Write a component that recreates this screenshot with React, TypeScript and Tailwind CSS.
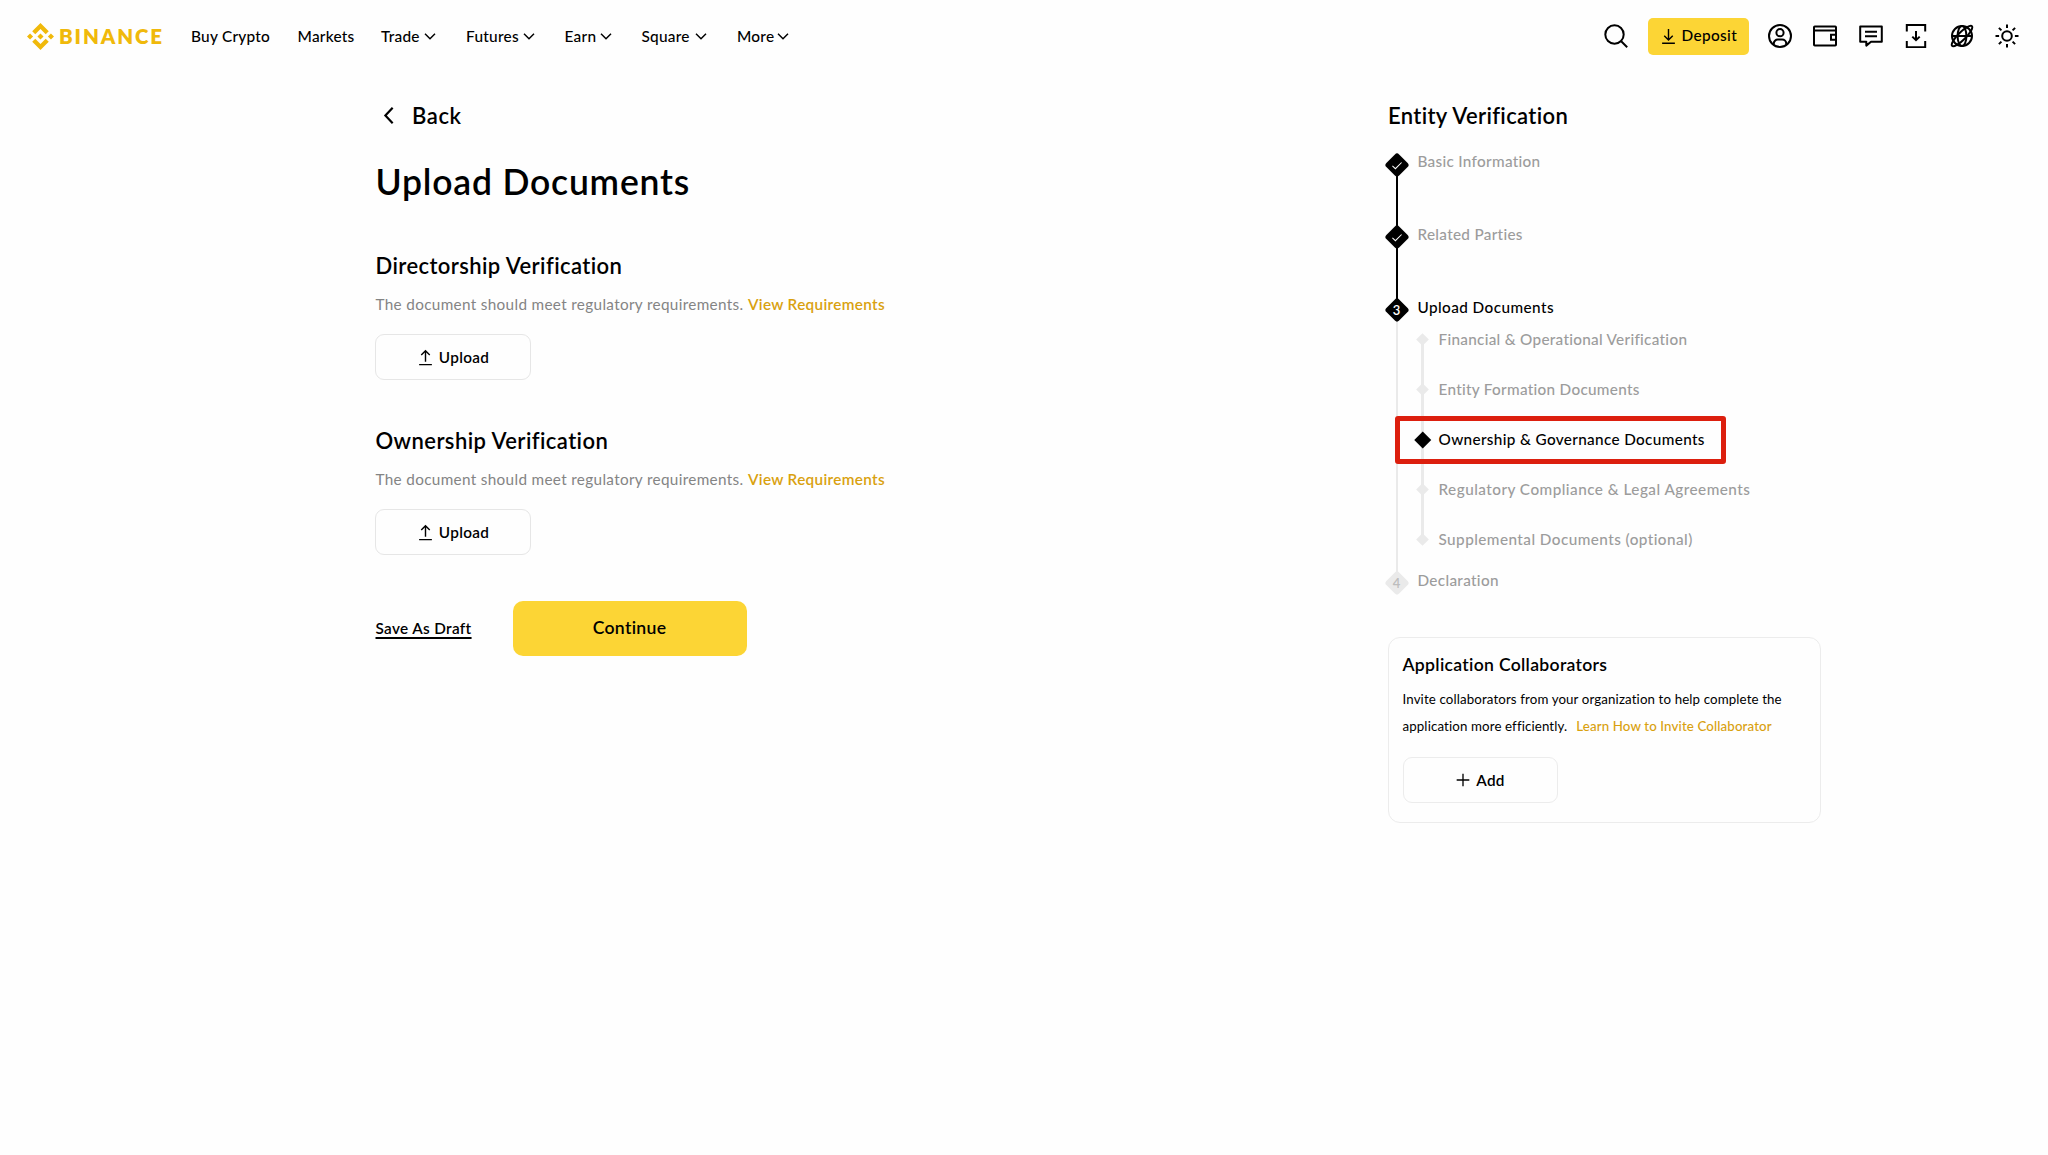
import type { ReactNode } from 'react'
import { SiBinance } from 'react-icons/si'

const NAV = [
  { label: 'Buy Crypto', menu: false, width: 'w-[78.5px]' },
  { label: 'Markets', menu: false, width: 'w-[55.5px]' },
  { label: 'Trade', menu: true, width: 'w-[39.5px]' },
  { label: 'Futures', menu: true, width: 'w-[53px]' },
  { label: 'Earn', menu: true, width: 'w-[31.5px]' },
  { label: 'Square', menu: true, width: 'w-[50px]' },
  { label: 'More', menu: true, width: 'w-[36.5px]' },
]

const SECTIONS = [
  { title: 'Directorship Verification', tracking: 'tracking-[0.4px]' },
  { title: 'Ownership Verification', tracking: 'tracking-[0.42px]' },
]

const SUB_STEPS = [
  { label: 'Financial & Operational Verification', active: false, tracking: 'tracking-[0.29px]' },
  { label: 'Entity Formation Documents', active: false, tracking: 'tracking-[0.29px]' },
  { label: 'Ownership & Governance Documents', active: true, tracking: 'tracking-[0.35px]' },
  { label: 'Regulatory Compliance & Legal Agreements', active: false, tracking: 'tracking-[0.47px]' },
  { label: 'Supplemental Documents (optional)', active: false, tracking: 'tracking-[0.44px]' },
]

function Icon({ children, className = 'size-6' }: { children: ReactNode; className?: string }) {
  return (
    <svg
      viewBox="0 0 24 24"
      fill="none"
      stroke="currentColor"
      strokeWidth="2"
      className={`shrink-0 ${className}`}
    >
      {children}
    </svg>
  )
}

function Header() {
  return (
    <header className="flex h-[73px] items-center justify-between pr-[29px] pl-[27px]">
      <div className="flex items-center">
        <div className="flex w-[164px] items-center text-[#f0b90b]">
          <SiBinance className="size-[27px] shrink-0" />
          <span className="ml-[5px] pb-px text-[20.5px] leading-6 font-extrabold tracking-[1.9px]">BINANCE</span>
        </div>
        <nav className="flex items-center gap-7 pb-[2px] text-[15.4px] leading-6 font-medium tracking-[0.25px]">
          {NAV.map((item) => (
            <div key={item.label} className="flex items-center whitespace-nowrap">
              <span className={item.width}>{item.label}</span>
              {item.menu && (
                <Icon className="ml-[1.5px] size-4">
                  <path d="M4.5 8.5l7.5 7.5 7.5-7.5" strokeWidth="2.2" />
                </Icon>
              )}
            </div>
          ))}
        </nav>
      </div>

      <div className="flex items-center pb-px">
        <Icon>
          <circle cx="10.5" cy="10.5" r="9.2" />
          <path d="M17.2 17.2l6 6" />
        </Icon>
        <button className="mr-[19px] ml-5 flex h-[37px] w-[100.5px] items-center rounded-[5px] bg-[#fcd535] pl-[12px] text-[15.4px] font-medium tracking-[0.35px]">
          <Icon className="mr-[4.5px] size-[17px]">
            <path d="M12 1.5v15.5M6 11l6 6 6-6M3 21.5h18" />
          </Icon>
          Deposit
        </button>
        <div className="flex items-center gap-[21.5px]">
          <Icon>
            <circle cx="12" cy="12" r="11" />
            <circle cx="12" cy="8.7" r="3.6" />
            <path d="M5.8 20.5v-1a4 4 0 0 1 4-4h4.4a4 4 0 0 1 4 4v1" />
          </Icon>
          <Icon>
            <rect x="1" y="2.5" width="22" height="19" rx="0.8" />
            <path d="M1 6.5h22M23 10.8h-5v5h5" />
          </Icon>
          <Icon>
            <path d="M1.2 2.5h21.6v15.3H12l-4.7 3.8v-3.8H1.2zM6 7.7h12M6 12.2h12" strokeLinejoin="round" />
          </Icon>
          <Icon>
            <path d="M2.8 7.4V1h18.4v6.4M2.8 17v6.2h18.4V17M12 7v9M8.3 12.6L12 16.2l3.7-3.6" />
          </Icon>
          <Icon>
            <circle cx="12" cy="12" r="10" />
            <ellipse cx="12" cy="12" rx="4.4" ry="10" />
            <path d="M2 12h20" />
            <ellipse cx="12" cy="12" rx="14" ry="3.8" transform="rotate(-45 12 12)" />
          </Icon>
          <Icon>
            <circle cx="12" cy="12" r="4.8" />
            <path d="M12 .5v3.6M12 19.9v3.6M.5 12h3.6M19.9 12h3.6M3.9 3.9l2.5 2.5M17.6 17.6l2.5 2.5M3.9 20.1l2.5-2.5M17.6 6.4l2.5-2.5" />
          </Icon>
        </div>
      </div>
    </header>
  )
}

function UploadForm() {
  return (
    <section className="w-[1012.5px]">
      <div className="flex h-[33px] items-center text-[22px] font-semibold tracking-[0.6px]">
        <Icon className="mr-[11px] ml-[0.5px] size-[25px]">
          <path d="M16 4.5L9 12l7 7.5" strokeWidth="2.1" />
        </Icon>
        Back
      </div>
      <h1 className="mt-[28px] text-[35.5px] leading-[43px] font-semibold tracking-[0.8px]">Upload Documents</h1>

      <div className="mt-[47.5px] space-y-[45.5px]">
        {SECTIONS.map((s) => (
          <div key={s.title}>
            <h2 className={`text-[22px] leading-[30px] font-semibold ${s.tracking}`}>{s.title}</h2>
            <p className="mt-[11px] flex text-[15.3px] leading-6 tracking-[0.33px] text-[#848484]">
              <span className="w-[372.5px]">The document should meet regulatory requirements.</span>
              <a className="font-semibold text-[#d9a10f]">View Requirements</a>
            </p>
            <button className="mt-[18.5px] -ml-[0.5px] flex h-[46px] w-[156px] items-center justify-center rounded-[9px] border border-[#e6e6e6] text-[15.3px] font-semibold tracking-[0.3px]">
              <Icon className="mr-[5px] size-[17px]">
                <path d="M12 18V2.5M6 8.5l6-6 6 6M3 22h18" />
              </Icon>
              Upload
            </button>
          </div>
        ))}
      </div>

      <div className="mt-[46px] flex h-[55px] items-center">
        <a className="w-[137px] text-[15.3px] font-semibold tracking-[0.35px] underline decoration-2 underline-offset-[3px]">
          Save As Draft
        </a>
        <button className="h-[55px] w-[234px] rounded-[10px] bg-[#fcd535] text-[17.6px] font-semibold tracking-[0.3px]">
          Continue
        </button>
      </div>
    </section>
  )
}

function Diamond({ children, muted }: { children: ReactNode; muted?: boolean }) {
  return (
    <div className="relative z-10 flex size-6 shrink-0 items-center justify-center">
      <div
        className={`flex size-[18px] rotate-45 items-center justify-center rounded-[3px] ${
          muted ? 'bg-[#eaeaea] text-[#bdbdbd]' : 'bg-black text-white'
        }`}
      >
        <span className="-rotate-45 text-[13px] leading-none font-semibold">{children}</span>
      </div>
    </div>
  )
}

function Check() {
  return (
    <Icon className="size-[11px]">
      <path d="M2 12.5l6.5 6L22 5" strokeWidth="2.2" />
    </Icon>
  )
}

function Steps() {
  return (
    <div className="mt-[20.5px] -ml-[3.5px] text-[15.3px] leading-6 font-medium text-[#9c9c9c]">
      {['Basic Information', 'Related Parties'].map((label) => (
        <div key={label} className="flex h-[72.5px] gap-[9px]">
          <div className="flex flex-col items-center">
            <Diamond>
              <Check />
            </Diamond>
            <div className="-my-1 w-[2px] flex-1 bg-black" />
          </div>
          <span className="-mt-[3.5px] tracking-[0.3px]">{label}</span>
        </div>
      ))}

      <div className="flex h-[273px] gap-[9px]">
        <div className="flex flex-col items-center">
          <Diamond>3</Diamond>
          <div className="-my-1 w-[2px] flex-1 bg-[#eaeaea]" />
        </div>
        <div className="-mt-[3px]">
          <p className="tracking-[0.43px] text-black">Upload Documents</p>
          <ul className="mt-2 -ml-[3px]">
            {SUB_STEPS.map((step, i) => (
              <li key={step.label} className="relative flex h-[50px] gap-2">
                <div className="flex w-4 flex-col items-center pt-[5px]">
                  <div className="relative z-10 flex size-4 shrink-0 items-center justify-center">
                    <div className={`rotate-45 ${step.active ? 'size-[11.5px] bg-black' : 'size-[9px] bg-[#eaeaea]'}`} />
                  </div>
                  {i < SUB_STEPS.length - 1 && <div className="-mt-2 -mb-[13px] w-[2.5px] flex-1 bg-[#eaeaea]" />}
                </div>
                <span className={`whitespace-nowrap ${step.tracking} ${step.active ? 'text-black' : ''}`}>
                  {step.label}
                </span>
                {step.active && (
                  <div className="absolute -top-[10.5px] -left-[20px] z-20 h-12 w-[331px] rounded-[3px] border-[5.5px] border-[#dc1f0e]" />
                )}
              </li>
            ))}
          </ul>
        </div>
      </div>

      <div className="flex h-6 gap-[9px]">
        <Diamond muted>4</Diamond>
        <span className="-mt-[3px] tracking-[0.32px]">Declaration</span>
      </div>
    </div>
  )
}

function Collaborators() {
  return (
    <div className="mt-[42.5px] h-[186px] w-[433px] rounded-xl border border-[#ececec] px-[13.5px] pt-[15px]">
      <h3 className="text-[17.6px] leading-6 font-semibold tracking-[0.3px]">Application Collaborators</h3>
      <p className="mt-[9px] text-[13.3px] leading-[27px] tracking-[0.12px] whitespace-nowrap">
        Invite collaborators from your organization to help complete the
        <br />
        application more efficiently.
        <a className="ml-[9px] font-medium text-[#d9a10f]">Learn How to Invite Collaborator</a>
      </p>
      <button className="mt-[17px] flex h-[46px] w-[155px] items-center justify-center rounded-[9px] border border-[#ececec] text-[15.3px] font-semibold tracking-[0.3px]">
        <Icon className="mr-[5px] size-4">
          <path d="M12 2.5v19M2.5 12h19" />
        </Icon>
        Add
      </button>
    </div>
  )
}

export default function App() {
  return (
    <div className="h-[1155px] w-[2048px] overflow-hidden bg-[#fefefe] font-['Lato',sans-serif] text-black">
      <Header />
      <main className="flex pt-[26px] pl-[375.5px]">
        <UploadForm />
        <aside className="w-[434px]">
          <h2 className="text-[22px] leading-[33px] font-semibold tracking-[0.35px]">Entity Verification</h2>
          <Steps />
          <Collaborators />
        </aside>
      </main>
    </div>
  )
}
